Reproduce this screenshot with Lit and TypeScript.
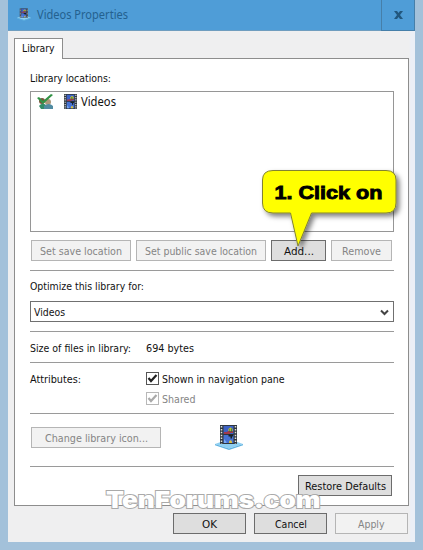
import { LitElement, html, css, svg } from "lit";
import { customElement, property } from "lit/decorators.js";

const film = (x: number, y: number, w: number, h: number) => svg`
  <svg x=${x} y=${y} width=${w} height=${h} viewBox="0 0 17 19" preserveAspectRatio="none">
    <rect width="17" height="19" fill="#30373f"></rect>
    <path d="M1.500 1V19M15.500 1V19" stroke="#dfe3dc" stroke-width="1.500" stroke-dasharray="1.500 1.400"></path>
    <rect x="3.500" y="1" width="10" height="8" fill="#3d62c4"></rect>
    <rect x="3.500" y="10" width="10" height="8" fill="#4673d3"></rect>
    <path d="M8.500 6.500V4Q10.500 1 12.500 4V6.500Z" fill="#d9cf35"></path>
    <path d="M4 7H7L8 6H13V8H10V9H4Z" fill="#a23a4c"></path>
    <path d="M9.800 3.500V7M11.500 3.500V7" stroke="#2d6d36" stroke-width=".8"></path>
    <path d="M8.500 9.500H13V11.500H12V13.500H10.500V11.500H8.500Z" fill="#172125"></path>
    <path d="M9 18V16.500Q10.500 14 12 16.500V18Z" fill="#d9c341"></path>
    <path d="M4 14L6.500 17V18H4Z" fill="#7ba9f2"></path>
  </svg>`;

/* A single line of text set to an exact width; its baseline is 12px below the top. */
@customElement("fit-text")
class FitText extends LitElement {
  @property({ type: Number }) w = 50;
  @property({ type: Number }) size = 11.2;
  @property() text = "";
  static styles = css`
    :host{display:block;height:16px;flex:none}
    svg{display:block;overflow:visible}
    text{fill:currentColor;white-space:pre;font-family:"DejaVu Sans Condensed","DejaVu Sans",sans-serif;font-stretch:condensed}
    :host([ui]) text{font-family:"Noto Sans","Open Sans",sans-serif;font-stretch:normal}
  `;
  render() {
    return html`<svg width=${this.w} height="16"><text x="0" y="12" font-size=${this.size} textLength=${this.w} lengthAdjust="spacingAndGlyphs">${this.text}</text></svg>`;
  }
}

@customElement("library-icon")
class LibraryIcon extends LitElement {
  static styles = css`:host{display:block;width:28px;height:25px}.base{display:block;width:100%;height:100%}`;
  render() {
    return html`<svg class="base" viewBox="0 0 28 25">
      <path d="M0 19L14 14L28 19L14 23.500Z" fill="#8fd0f2"></path>
      <path d="M0 19L14 23.500L28 19V20.300L14 25L0 20.300Z" fill="#5fb2e0"></path>
      ${film(5, 0, 17, 19)}
    </svg>`;
  }
}

@customElement("push-button")
class PushButton extends LitElement {
  @property({ type: Boolean, reflect: true }) disabled = false;
  @property() label = "";
  @property({ type: Number }) w = 50;
  static styles = css`
    :host{display:flex;justify-content:center;box-sizing:border-box;height:21px;padding-top:2px;border:1px solid #6c6c6c;background:#dedede;color:#111}
    :host([disabled]){border-color:#b5b5b5;background:#f2f2f2;color:#858585}
  `;
  render() { return html`<fit-text w=${this.w} text=${this.label}></fit-text>`; }
}

@customElement("app-root")
class AppRoot extends LitElement {
  static styles = css`
    :host{display:block;width:423px;height:550px;overflow:hidden;box-sizing:border-box;padding:0 8px;background:#a3c1da;font:12px "Noto Sans","Open Sans",sans-serif;color:#111;position:relative}
    *{box-sizing:border-box}
    .window{width:407px;height:542px;background:linear-gradient(90deg,#efeff0 401px,#ebeff6 403px);display:flex;flex-direction:column}
    .title{height:31px;background:#4f9dd7;border-bottom:1px solid #6f9dbf;display:flex;color:#24618f;flex:none}
    .title library-icon{width:14px;height:13px;margin:8px 6px 0 9px}
    .title fit-text{margin-top:7px}
    .close{width:34px;height:31px;margin-left:auto;border:1px solid #467fa9;border-top:0;display:flex;align-items:center;justify-content:center}
    .close svg{width:9px;height:8px;margin-top:-1px}
    .tab{width:49px;height:21px;margin:7px 0 0 6px;border:1px solid #8d8d8d;border-bottom:0;background:#fff;padding:1px 0 0 7px;position:relative;z-index:1;flex:none}
    .panel{width:395px;height:448px;margin:-1px 0 0 6px;border:1px solid #8d8d8d;background:#fff;padding:0 14px 0 15px;display:flex;flex-direction:column;flex:none}
    .label{height:32px;padding-top:11px;flex:none}
    .list{height:141px;width:364px;border:1px solid #969696;display:flex;align-items:flex-start;padding:2px 0 0 6px;flex:none}
    .list fit-text{margin-left:4px}
    .list svg{flex:none}
    .actions{display:grid;grid-template-columns:100px 130px 55px 61px;gap:5px;padding:8px 0 0 1px;height:38px;flex:none}
    .rule{background:#9a9a9a;height:1px;width:364px;flex:none}
    .opt{height:30px;padding-top:7px;flex:none}
    .select{height:21px;width:364px;border:1px solid #707070;display:flex;justify-content:space-between;padding:2px 4px 0 3px;margin-bottom:9px;flex:none}
    .select svg{margin-top:5px}
    .size{height:30px;display:grid;grid-template-columns:115.5px 1fr;padding-top:8px;flex:none}
    .attrs{height:50px;display:grid;grid-template-columns:116px 1fr;padding-top:8px;flex:none}
    .check{display:flex;height:20px;gap:3px}
    .box{width:13px;height:13px;margin-top:1px;border:1px solid #555;color:#222}
    .box svg{display:block}
    .off{color:#858585}
    .off .box{border-color:#b8b8b8;color:#aaa}
    .iconrow{height:52px;display:flex;align-items:flex-start;padding:13px 0 0 1px;flex:none}
    .iconrow push-button{width:130px}
    .iconrow library-icon{margin:-2px 0 0 54px}
    .restore{width:94px;margin:8px 0 0 268px}
    .footer{display:flex;gap:8px;padding:7px 0 0 165px}
    .footer push-button{width:73px}
    .callout{position:absolute;left:254px;top:162px}
    .mark{position:absolute;left:100px;top:480px}
    .callout text{font-family:"Liberation Sans",sans-serif;font-weight:700}
    .mark text{font-family:Inter,"Liberation Sans",sans-serif;font-weight:900;paint-order:stroke}
  `;
  private tick() {
    return html`<svg width="11" height="11" viewBox="0 0 11 11"><path d="M1.500 5L4 8L9.500 2" fill="none" stroke="currentColor" stroke-width="2.200"></path></svg>`;
  }
  render() {
    return html`
    <div class="window">
      <div class="title"><library-icon></library-icon><fit-text ui w="91" size="12" text="Videos Properties"></fit-text>
        <div class="close"><svg viewBox="0 0 9 8"><path d="M0 0H3L4.500 2L6 0H9L6 4L9 8H6L4.500 6L3 8H0L3 4Z" fill="#22577d"></path></svg></div>
      </div>
      <div class="tab"><fit-text w="32.5" text="Library"></fit-text></div>
      <div class="panel">
        <div class="label"><fit-text w="81" text="Library locations:"></fit-text></div>
        <div class="list">
          <svg width="40" height="16" viewBox="0 0 40 16">
            <circle cx="5" cy="7" r="3" fill="#79543c"></circle><circle cx="11" cy="8" r="3" fill="#ad987b"></circle>
            <path d="M2 12Q5 8 9 11L8 15H4Z" fill="#328c68"></path><path d="M7 15V12Q12 8 16 12V15Z" fill="#518ba1"></path>
            <path d="M0 4L2 3L6 7L14 0L16 1L6 10Z" fill="#329346"></path>
            ${film(27, 0, 13, 15)}
          </svg><fit-text ui w="35" size="12" text="Videos"></fit-text>
        </div>
        <div class="actions"><push-button disabled w="82" label="Set save location"></push-button><push-button disabled w="112" label="Set public save location"></push-button><push-button w="30" label="Add..."></push-button><push-button disabled w="39" label="Remove"></push-button></div>
        <div class="rule"></div>
        <div class="opt"><fit-text w="114" text="Optimize this library for:"></fit-text></div>
        <div class="select"><fit-text w="31" text="Videos"></fit-text><svg width="9" height="7" viewBox="0 0 9 7"><path d="M1 1.500L4.500 5L8 1.500" fill="none" stroke="#444" stroke-width="2"></path></svg></div>
        <div class="rule"></div>
        <div class="size"><fit-text w="101" text="Size of files in library:"></fit-text><fit-text w="48" text="694 bytes"></fit-text></div>
        <div class="rule"></div>
        <div class="attrs"><fit-text w="51" text="Attributes:"></fit-text><div><div class="check"><div class="box">${this.tick()}</div><fit-text w="122.5" text="Shown in navigation pane"></fit-text></div><div class="check off"><div class="box">${this.tick()}</div><fit-text w="33.5" text="Shared"></fit-text></div></div></div>
        <div class="rule"></div>
        <div class="iconrow"><push-button disabled w="103" label="Change library icon..."></push-button><library-icon></library-icon></div>
        <div class="rule"></div>
        <push-button class="restore" w="81" label="Restore Defaults"></push-button>
      </div>
      <div class="footer"><push-button w="15" label="OK"></push-button><push-button w="32" label="Cancel"></push-button><push-button disabled w="26.5" label="Apply"></push-button></div>
    </div>
    <svg class="callout" width="155" height="95" viewBox="254 162 155 95">
      <defs><filter id="shade" x="-10%" y="-10%" width="125%" height="125%"><feDropShadow dx="3" dy="3" stdDeviation="2.500" flood-opacity=".5"></feDropShadow></filter></defs>
      <path d="M273 170.500H386Q396 170.500 396 180V203Q396 213 386 213H311.500L298 246L290.500 213H273Q262.500 213 262.500 203V180Q262.500 170.500 273 170.500Z" fill="#ffff00" stroke="#828232" filter="url(#shade)"></path>
      <text x="274.500" y="199" font-size="19" textLength="108" lengthAdjust="spacingAndGlyphs" fill="#000" stroke="#000" stroke-width=".9">1. Click on</text>
    </svg>
    <svg class="mark" width="230" height="38" viewBox="100 480 230 38">
      <text x="106" y="507.500" font-size="22.500" textLength="214.500" lengthAdjust="spacingAndGlyphs" fill="#fff" stroke="#aaa" stroke-width="1.800">TenForums.com</text>
    </svg>`;
  }
}
